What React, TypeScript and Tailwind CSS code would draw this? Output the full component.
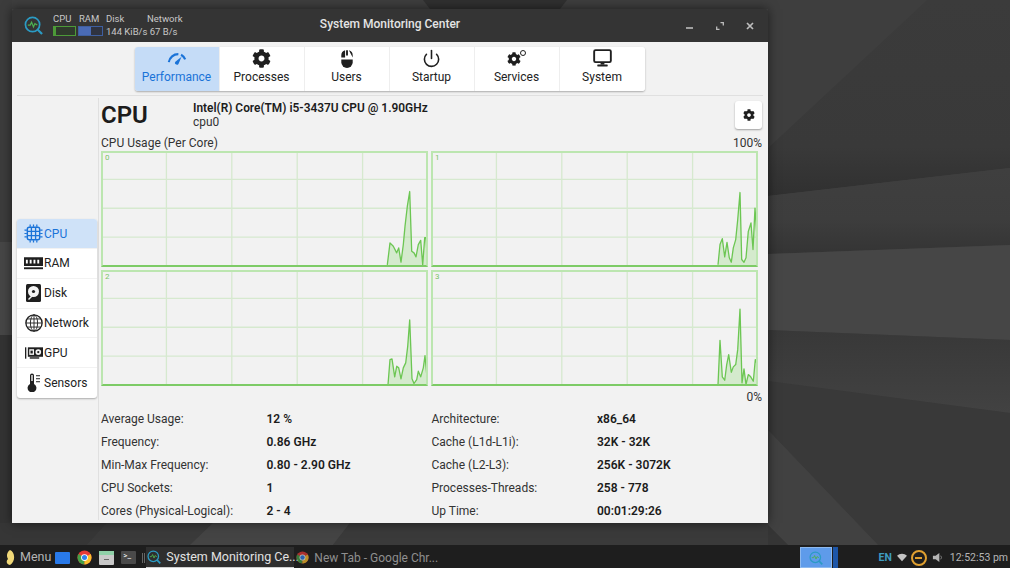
import { Power } from "lucide-react";
import { FaCog } from "react-icons/fa";

const font = "font-['Roboto',sans-serif]";

// core graphs, points read off the reference (zoomed 3x, hence the mapping below)
const cores: { id: number; pts: number[][]; yo: number }[] = [
  {
    id: 0,
    yo: 19,
    pts: [[82,286],[90,220],[100,230],[110,250],[116,235],[123,278],[130,225],[135,170],[142,110],[149,65],[155,245],[162,250],[168,262],[175,225],[182,212],[188,286],[194,204],[198,204],[202,270]],
  },
  {
    id: 1,
    yo: 19,
    pts: [[84,286],[90,225],[97,207],[104,262],[111,218],[118,265],[124,278],[130,235],[137,210],[143,150],[150,68],[155,270],[162,278],[168,265],[175,185],[183,160],[189,240],[195,115],[202,215]],
  },
  {
    id: 2,
    yo: 20,
    pts: [[84,286],[90,210],[96,208],[104,262],[110,230],[116,235],[123,268],[130,235],[137,220],[143,170],[149,90],[156,268],[162,282],[170,270],[175,245],[182,262],[190,235],[195,198],[203,286]],
  },
  {
    id: 3,
    yo: 20,
    pts: [[84,286],[90,152],[97,262],[104,272],[110,225],[116,195],[124,248],[130,232],[137,225],[143,180],[150,58],[156,280],[162,238],[168,285],[175,255],[182,262],[190,275],[196,210],[203,228]],
  },
];

function CoreGraph({ id, pts, yo }: { id: number; pts: number[][]; yo: number }) {
  const mapped = pts.map(([x, y]) => `${(259 + x / 3).toFixed(1)},${(yo + y / 3).toFixed(1)}`);
  const line = mapped.join(" ");
  const area = `${line} 325,115 ${(259 + pts[0][0] / 3).toFixed(1)},115`;
  return (
    <div className="relative h-full w-full border-2 border-[#bce6b0] border-b-[#7dcb66]">
      <span className="absolute left-[2px] -top-[1px] text-[8px] leading-[11px] text-[#7cc468]">{id}</span>
      <svg viewBox="2 2 323 112.5" preserveAspectRatio="none" className="h-full w-full">
        {[65.4, 130.8, 196.2, 261.6].map((x) => (
          <line key={x} x1={x} x2={x} y1="0" y2="116" stroke="#d6e9cf" strokeWidth="1.3" />
        ))}
        {[28.5, 57.5, 86.5].map((y) => (
          <line key={y} x1="0" x2="327" y1={y} y2={y} stroke="#d6e9cf" strokeWidth="1.3" />
        ))}
        <polygon points={area} fill="#8fd678" fillOpacity="0.3" />
        <polyline points={line} fill="none" stroke="#6cc653" strokeWidth="1.3" strokeLinejoin="round" />
      </svg>
    </div>
  );
}

function Gauge() {
  return (
    <svg viewBox="0 0 22 14" className="h-[13px] w-[20px]" fill="none">
      <path d="M2 11 A10.5 10.5 0 0 1 12.5 2.2 M15.5 2.8 A10.5 10.5 0 0 1 20 8" stroke="#1a73d8" strokeWidth="2.4" />
      <path d="M9.2 10.5 L16 5 L12.6 13 A2 2 0 0 1 9.2 10.5 Z" fill="#1a73d8" />
    </svg>
  );
}

function MouseIcon() {
  return (
    <svg viewBox="0 0 14 20" className="h-[19px] w-[14px]" fill="#1f1f1f">
      <path d="M1 9 V6.5 A5.5 5.5 0 0 1 5 1.2 V9 Z M9 1.2 A5.5 5.5 0 0 1 13 6.5 V9 Z" />
      <rect x="6" y="1" width="2" height="6" rx="1" />
      <path d="M1 11 H13 V14 A6 6 0 0 1 1 14 Z" />
    </svg>
  );
}

function Services() {
  return (
    <div className="relative h-[19px] w-[19px]">
      <FaCog className="absolute left-0 top-[3px] text-[14px] text-[#1f1f1f]" />
      <span className="absolute right-0 top-[1px] h-[6px] w-[6px] rounded-full border-[1.5px] border-[#1f1f1f]" />
    </div>
  );
}

function MonitorIcon() {
  return (
    <svg viewBox="0 0 20 19" className="h-[18px] w-[19px]" fill="none">
      <rect x="1.2" y="1.2" width="17.6" height="12.6" rx="1.4" stroke="#1f1f1f" strokeWidth="2" />
      <rect x="8" y="14" width="4" height="2.5" fill="#1f1f1f" />
      <rect x="4.5" y="16.3" width="11" height="2.2" rx="0.5" fill="#1f1f1f" />
    </svg>
  );
}

function ChipIcon() {
  return (
    <svg viewBox="0 0 20 20" className="h-[19px] w-[19px]" fill="none" stroke="#1a73d8">
      <rect x="3.5" y="3.5" width="13" height="13" rx="2" strokeWidth="1.5" />
      <path d="M7.8 4 V16 M12.2 4 V16 M4 7.8 H16 M4 12.2 H16" strokeWidth="1.4" />
      <path d="M6.5 0.5 V3 M10 0.5 V3 M13.5 0.5 V3 M6.5 17 V19.5 M10 17 V19.5 M13.5 17 V19.5 M0.5 6.5 H3 M0.5 10 H3 M0.5 13.5 H3 M17 6.5 H19.5 M17 10 H19.5 M17 13.5 H19.5" strokeWidth="1.3" />
    </svg>
  );
}

function GlobeIcon() {
  return (
    <svg viewBox="0 0 20 20" className="h-[18px] w-[18px]" fill="none" stroke="#1f1f1f">
      <circle cx="10" cy="10" r="9" strokeWidth="1.5" />
      <ellipse cx="10" cy="10" rx="4" ry="9" strokeWidth="1" />
      <path d="M10 1 V19 M1 10 H19 M2.5 5.5 H17.5 M2.5 14.5 H17.5" strokeWidth="1" />
    </svg>
  );
}

function RamIcon() {
  return (
    <svg viewBox="0 0 20 13" className="h-[13px] w-[19px]" fill="#1f1f1f">
      <path d="M0 0 H20 V9 H0 Z M2 2.5 V6.5 H4 V2.5 Z M6 2.5 V6.5 H8 V2.5 Z M10 2.5 V6.5 H12 V2.5 Z M14 2.5 V6.5 H16 V2.5 Z" fillRule="evenodd" />
      <rect x="0" y="10.5" width="20" height="2" />
    </svg>
  );
}

function DiskIcon() {
  return (
    <svg viewBox="0 0 15 18" className="h-[18px] w-[15px]">
      <rect x="0" y="0" width="15" height="18" rx="1.5" fill="#1f1f1f" />
      <circle cx="7.5" cy="7.5" r="5.5" fill="#f4f4f4" />
      <circle cx="7.5" cy="7.5" r="1.6" fill="#1f1f1f" />
      <path d="M2.5 15.5 L8 10" stroke="#f4f4f4" strokeWidth="1.4" />
    </svg>
  );
}

function GpuIcon() {
  return (
    <svg viewBox="0 0 19 14" className="h-[14px] w-[18px]">
      <rect x="0" y="1" width="1.4" height="12" fill="#1f1f1f" />
      <path d="M3 1 H19 V11 H3 Z" fill="#1f1f1f" />
      <rect x="4.5" y="3" width="5" height="6" fill="#f4f4f4" />
      <rect x="5.8" y="4.5" width="2.4" height="3" fill="#1f1f1f" />
      <circle cx="14" cy="6" r="3" fill="#f4f4f4" />
      <circle cx="14" cy="6" r="1.2" fill="#1f1f1f" />
      <rect x="5" y="11.5" width="10" height="1.5" fill="#1f1f1f" />
    </svg>
  );
}

function ThermoIcon() {
  return (
    <svg viewBox="0 0 14 19" className="h-[19px] w-[14px]">
      <path d="M3 2 A2 2 0 0 1 7 2 V10.5 A4.4 4.4 0 1 1 3 10.5 Z" fill="#1f1f1f" transform="translate(0 0.5)" />
      <rect x="4.3" y="2" width="1.4" height="6" fill="#f4f4f4" />
      <rect x="9" y="2" width="4" height="1.3" fill="#555" />
      <rect x="9" y="5" width="4" height="1.3" fill="#555" />
      <rect x="9" y="8" width="4" height="1.3" fill="#555" />
    </svg>
  );
}

const tabs = [
  { label: "Performance", icon: <Gauge />, active: true },
  { label: "Processes", icon: <FaCog className="text-[19px] text-[#1f1f1f]" /> },
  { label: "Users", icon: <MouseIcon /> },
  { label: "Startup", icon: <Power className="h-[19px] w-[19px] text-[#1f1f1f]" strokeWidth={2} /> },
  { label: "Services", icon: <Services /> },
  { label: "System", icon: <MonitorIcon /> },
];

const sideItems = [
  { label: "CPU", icon: <ChipIcon />, active: true },
  { label: "RAM", icon: <RamIcon /> },
  { label: "Disk", icon: <DiskIcon /> },
  { label: "Network", icon: <GlobeIcon /> },
  { label: "GPU", icon: <GpuIcon /> },
  { label: "Sensors", icon: <ThermoIcon /> },
];

const leftStats = [
  ["Average Usage:", "12 %"],
  ["Frequency:", "0.86 GHz"],
  ["Min-Max Frequency:", "0.80 - 2.90 GHz"],
  ["CPU Sockets:", "1"],
  ["Cores (Physical-Logical):", "2 - 4"],
];
const rightStats = [
  ["Architecture:", "x86_64"],
  ["Cache (L1d-L1i):", "32K - 32K"],
  ["Cache (L2-L3):", "256K - 3072K"],
  ["Processes-Threads:", "258 - 778"],
  ["Up Time:", "00:01:29:26"],
];

function StatCol({ rows }: { rows: string[][] }) {
  return (
    <div className="flex flex-col gap-[6px]">
      {rows.map(([k, v]) => (
        <div key={k} className="flex h-[17px] items-center text-[12px] text-[#333]">
          <span className="w-[165.5px]">{k}</span>
          <span className="font-semibold text-[#1c1c1c]">{v}</span>
        </div>
      ))}
    </div>
  );
}

function AppLogo({ size }: { size: number }) {
  return (
    <svg viewBox="0 0 20 20" width={size} height={size} fill="none">
      <circle cx="9" cy="9" r="7.5" stroke="#2b9bc4" strokeWidth="1.8" />
      <path d="M4 9.5 L6.5 9.5 L8 6.5 L10 11.5 L11.5 8 L14 9.5" stroke="#4caf50" strokeWidth="1.3" />
      <path d="M14.5 14.5 L19 19" stroke="#2b9bc4" strokeWidth="2.4" />
    </svg>
  );
}

function Chrome({ dim }: { dim?: boolean }) {
  return (
    <svg viewBox="0 0 16 16" className={dim ? "h-[13px] w-[13px] opacity-70" : "h-[15px] w-[15px]"}>
      <circle cx="8" cy="8" r="7.5" fill="#e53935" />
      <path d="M8 8 L1.5 4.3 A7.5 7.5 0 0 0 8 15.5 Z" fill="#43a047" />
      <path d="M8 8 L14.5 4.3 A7.5 7.5 0 0 1 8 15.5 Z" fill="#fbc02d" />
      <circle cx="8" cy="8" r="3.6" fill="#fff" />
      <circle cx="8" cy="8" r="2.7" fill="#2f80ed" />
    </svg>
  );
}

export default function App() {
  return (
    <div className={`${font} relative flex h-[568px] w-[1010px] flex-col overflow-hidden bg-[#3a3a3a]`}>
      {/* wallpaper */}
      <svg viewBox="0 0 1010 568" className="absolute inset-0 h-full w-full">
        <defs>
          <linearGradient id="bandA" x1="0" y1="0" x2="0" y2="1">
            <stop offset="0" stopColor="#3b3b3b" />
            <stop offset="0.75" stopColor="#393939" />
            <stop offset="1" stopColor="#303030" />
          </linearGradient>
          <linearGradient id="bandB" x1="0" y1="0" x2="0" y2="1">
            <stop offset="0" stopColor="#3f3f3f" />
            <stop offset="0.6" stopColor="#3d3d3d" />
            <stop offset="1" stopColor="#343434" />
          </linearGradient>
          <linearGradient id="bandD" x1="0" y1="0" x2="0" y2="1">
            <stop offset="0" stopColor="#383838" />
            <stop offset="1" stopColor="#424242" />
          </linearGradient>
        </defs>
        <rect width="1010" height="568" fill="#3e3e3e" />
        <polygon points="768,148 927,0 1010,0 1010,168 768,196" fill="url(#bandA)" />
        <polygon points="768,196 1010,168 1010,245 768,254" fill="url(#bandB)" />
        <polygon points="768,254 1010,245 1010,340 768,330" fill="#464646" />
        <polygon points="768,330 1010,340 1010,413 768,381" fill="url(#bandD)" />
        <polygon points="768,381 1010,413 1010,545 878,545 768,430" fill="#393939" />
        <polygon points="768,430 878,545 788,545 768,525" fill="#414141" />
        <polygon points="768,525 788,545 768,545" fill="#353535" />
        <polygon points="0,0 12,0 12,242 0,242" fill="#3c3c3c" />
        <polygon points="0,242 12,242 12,335 0,335" fill="#464646" />
        <polygon points="0,335 12,335 12,545 0,545" fill="#333333" />
        <polygon points="423,0 567,0 560,9 430,9" fill="#303030" />
        <polygon points="0,523 107,523 87,545 0,545" fill="#363636" />
        <polygon points="107,523 213,523 190,545 87,545" fill="#3a3a3a" />
        <polygon points="213,523 350,523 333,545 190,545" fill="#444444" />
        <polygon points="350,523 768,523 768,545 333,545" fill="#3a3a3a" />
      </svg>

      {/* window */}
      <div className="relative ml-[12px] mt-[9px] flex h-[514px] w-[756px] flex-col shadow-[0_0_10px_rgba(0,0,0,0.55)]">
        <div className="flex h-[33px] items-center rounded-t-[3px] bg-[#343434] text-[#d6d6d6]">
          <div className="ml-[12px] mr-[10px] -mt-[1px]">
            <AppLogo size={19} />
          </div>
          <div className="-mt-[2px] flex flex-col text-[9.5px] leading-[13px] text-[#c8c8c8]">
            <div className="flex">
              <span className="w-[26px]">CPU</span>
              <span className="w-[27px]">RAM</span>
              <span className="w-[41px]">Disk</span>
              <span>Network</span>
            </div>
            <div className="flex items-center">
              <div className="mr-[2px] h-[10px] w-[23px] border border-[#4c9a38] bg-[#2f3a2c]">
                <div className="h-full w-[2px] bg-[#4c9a38]" />
              </div>
              <div className="mr-[3px] h-[10px] w-[25px] border border-[#3f5f9f] bg-[#2f3340]">
                <div className="h-full w-[12px] bg-[#4a6bb5]" />
              </div>
              <span className="whitespace-nowrap">144 KiB/s 67 B/s</span>
            </div>
          </div>
          <div className="absolute left-0 right-0 top-[8px] text-center text-[12px] font-medium leading-[15px] text-[#e4e4e4]">
            System Monitoring Center
          </div>
          <div className="ml-auto mr-[13px] flex items-center gap-[21px]">
            <svg viewBox="0 0 11 11" className="mt-[3px] h-[11px] w-[11px]" stroke="#bdbdbd" strokeWidth="1.6">
              <path d="M2 6 H9" />
            </svg>
            <svg viewBox="0 0 8 8" className="h-[8px] w-[8px]" fill="none" stroke="#bdbdbd" strokeWidth="1.3">
              <path d="M4.5 0.7 H7.3 V3.5 M3.5 7.3 H0.7 V4.5" />
            </svg>
            <svg viewBox="0 0 10 10" className="h-[10px] w-[10px]" stroke="#bdbdbd" strokeWidth="1.7">
              <path d="M2 2 L8 8 M8 2 L2 8" />
            </svg>
          </div>
        </div>

        <div className="flex flex-1 flex-col bg-[#f2f2f2] px-[5px]">
          <div className="flex h-[54px] justify-center border-b border-[#e0e0e0] pt-[5px] pr-[1px]">
            <div className="flex h-[44px] rounded-[3px] shadow-[0_1px_2px_rgba(0,0,0,0.3)]">
              {tabs.map((t) => (
                <div
                  key={t.label}
                  className={`flex w-[85px] flex-col items-center justify-end gap-[1px] border-r border-[#eeeeee] pb-[6px] text-[12px] leading-[15px] first:rounded-l-[3px] last:rounded-r-[3px] last:border-r-0 ${
                    t.active ? "bg-[#c5dcf7] text-[#1a73d8]" : "bg-white text-[#222]"
                  }`}
                >
                  <div className="flex h-[22px] items-center justify-center">{t.icon}</div>
                  <span>{t.label}</span>
                </div>
              ))}
            </div>
          </div>

          <div className="flex flex-1 pt-[2px] pb-[3px]">
            {/* side list */}
            <div className="flex w-[82px] flex-col justify-center border-r border-[#e0e0e0] pr-[1px]">
              <div className="-mt-[1px] flex flex-col rounded-[3px] bg-white shadow-[0_1px_2px_rgba(0,0,0,0.3)]">
                {sideItems.map((s) => (
                  <div
                    key={s.label}
                    className={`flex h-[29.7px] items-center border-b border-[#f2f2f2] text-[12px] last:border-b-0 first:rounded-t-[3px] ${
                      s.active ? "bg-[#cfe2f8] text-[#1a73d8]" : "text-[#222]"
                    }`}
                  >
                    <div className="flex w-[27px] justify-center pl-[6px]">{s.icon}</div>
                    <span>{s.label}</span>
                  </div>
                ))}
              </div>
            </div>

            {/* cpu page */}
            <div className="flex flex-1 flex-col pl-[2px] pr-[1px]">
              <div className="flex h-[37px] items-start">
                <div className="w-[92px] text-[24px] font-semibold leading-[34px] text-[#1c1c1c]">CPU</div>
                <div className="flex flex-col pt-[3px] text-[11.9px] leading-[14px]">
                  <span className="font-semibold text-[#1c1c1c]">Intel(R) Core(TM) i5-3437U CPU @ 1.90GHz</span>
                  <span className="text-[#333]">cpu0</span>
                </div>
                <div className="ml-auto mt-[3px] flex h-[28px] w-[27px] items-center justify-center rounded-[3px] bg-white shadow-[0_1px_2px_rgba(0,0,0,0.35)]">
                  <FaCog className="text-[12px] text-[#1f1f1f]" />
                </div>
              </div>
              <div className="flex h-[16px] items-center justify-between text-[12px] text-[#333]">
                <span>CPU Usage (Per Core)</span>
                <span>100%</span>
              </div>
              <div className="grid h-[235px] w-[657px] grid-cols-2 grid-rows-2 gap-x-[3px] gap-y-[3px]">
                {cores.map((c) => (
                  <CoreGraph key={c.id} id={c.id} pts={c.pts} yo={c.yo} />
                ))}
              </div>
              <div className="flex h-[23px] items-start justify-end pt-[4px] text-[12px] leading-[14px] text-[#333]">0%</div>
              <div className="mt-[1px] grid grid-cols-[330.5px_1fr]">
                <StatCol rows={leftStats} />
                <StatCol rows={rightStats} />
              </div>
            </div>
          </div>
        </div>
      </div>

      {/* taskbar */}
      <div className="absolute bottom-0 left-0 right-0 flex h-[23px] items-center bg-[#1e1e1e] pt-[2px] text-[12.5px] text-[#b5b5b5]">
        <svg viewBox="0 0 10 15" className="ml-[5px] h-[15px] w-[10px]">
          <path d="M5 0 C10 2 11 11 5 15 C1 14 1 11 3 9 C1 6 2 2 5 0 Z" fill="#f0d878" />
        </svg>
        <span className="ml-[5px]">Menu</span>
        <div className="ml-[4px] flex h-[12px] w-[15px] flex-col rounded-[1px] bg-[#2979e8]" />
        <div className="ml-[7px]">
          <Chrome />
        </div>
        <div className="ml-[7px] flex h-[14px] w-[15px] flex-col rounded-[1px] bg-[#c9c9c9]">
          <div className="h-[4px] bg-[#8fd0a8]" />
          <div className="mx-auto mt-[4px] h-[1.5px] w-[5px] bg-[#666]" />
        </div>
        <div className="ml-[7px] flex h-[13px] w-[15px] rounded-[1px] bg-[#4a4a4a] pl-[2px] text-[8px] leading-[10px] text-white">{">_"}</div>
        <div className="ml-[6px] h-[10px] w-[3px] border-x border-[#666]" />
        <div className="ml-[1px] flex h-[21px] w-[148px] items-center border-b-[1.5px] border-[#d0d0d0] bg-[#2e2e2e] text-[#e2e2e2]">
          <div className="ml-[1px]">
            <AppLogo size={14} />
          </div>
          <span className="ml-[5px] whitespace-nowrap">System Monitoring Ce...</span>
        </div>
        <div className="ml-[2px]">
          <Chrome dim />
        </div>
        <span className="ml-[5px] whitespace-nowrap text-[12px] text-[#8f8f8f]">New Tab - Google Chr...</span>

        <div className="ml-auto flex h-[21px] items-center">
          <div className="flex h-[21px] w-[32px] items-center justify-center border border-[#8db9ee] bg-[#5e9bea]">
            <AppLogo size={14} />
          </div>
          <div className="ml-[1px] h-[21px] w-[5px] bg-[#1d56a8]" />
          <div className="flex h-[21px] w-[172px] items-center justify-end pr-[2px]">
            <span className="mr-[5px] text-[10.5px] font-bold text-[#3f9cc0]">EN</span>
            <svg viewBox="0 0 12 9" className="mr-[4px] h-[9px] w-[10px]">
              <path d="M0 2.5 A8.5 8.5 0 0 1 12 2.5 L6 9 Z" fill="#c4c4c4" />
            </svg>
            <div className="mr-[5px] flex h-[16px] w-[16px] items-center justify-center rounded-full border-2 border-[#e0a030]">
              <div className="h-[2px] w-[7px] bg-[#e0a030]" />
            </div>
            <svg viewBox="0 0 12 12" className="mr-[7px] h-[11px] w-[11px]">
              <path d="M1 4 H4 L8 1 V11 L4 8 H1 Z" fill="#b5b5b5" />
              <path d="M9.5 4 A3 3 0 0 1 9.5 8" stroke="#888" fill="none" />
            </svg>
            <span className="whitespace-nowrap text-[10.5px] text-[#b5b5b5]">12:52:53 pm</span>
          </div>
        </div>
      </div>
    </div>
  );
}
